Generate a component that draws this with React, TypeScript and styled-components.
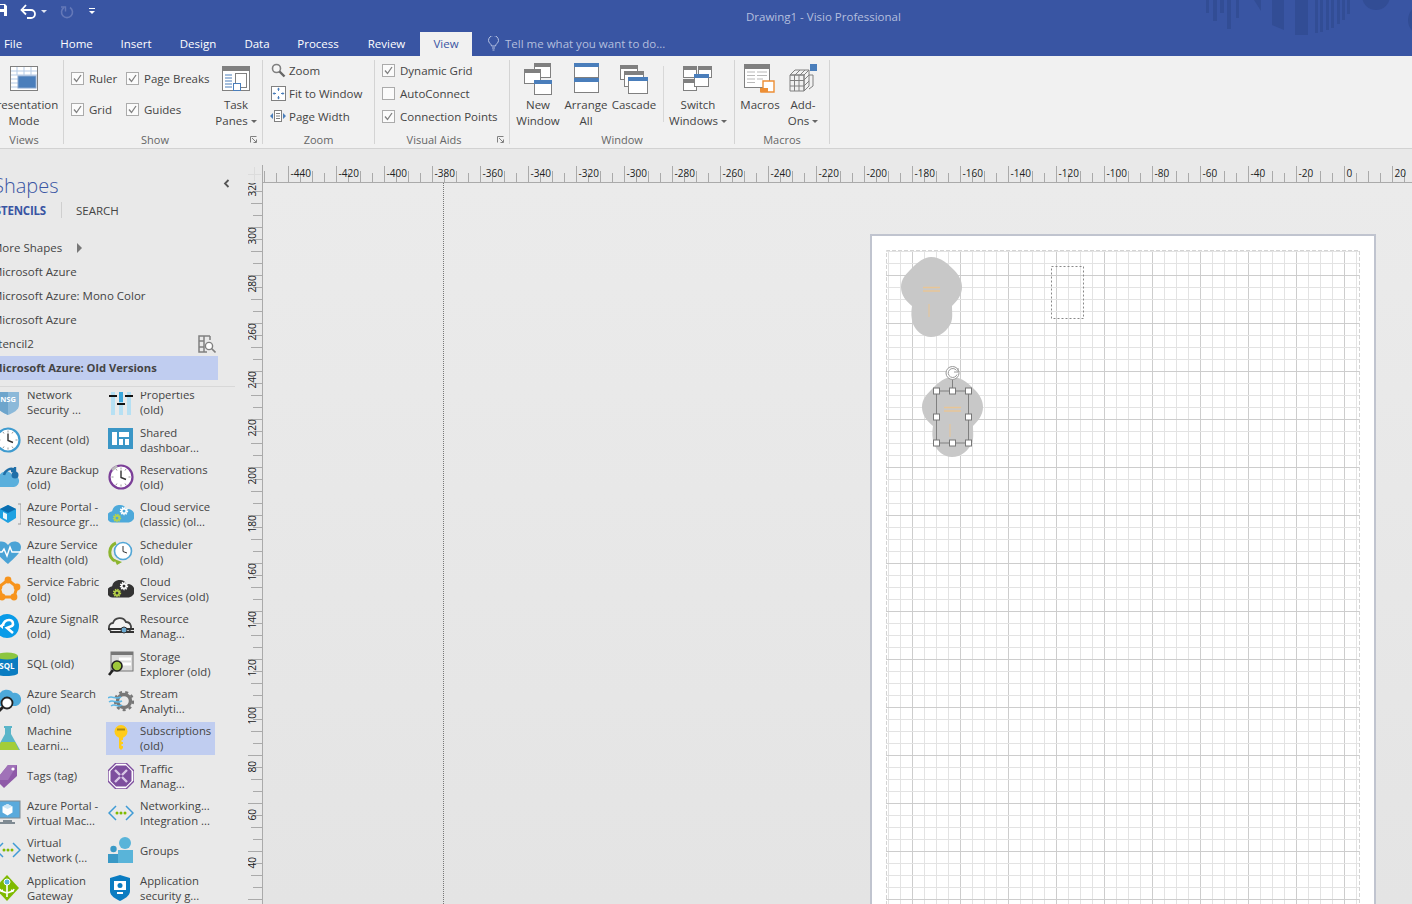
import React from 'react';
import styled, { createGlobalStyle } from 'styled-components';

const BLUE = '#3955a3';
const TEXT = '#444';
const GRAY = '#808080';
const ICON_BLUE = '#4a7ebb';

const GlobalStyle = createGlobalStyle`
  html, body { margin: 0; padding: 0; overflow: hidden; }
  body { font-family: "Open Sans", "Noto Sans", sans-serif; font-size: 11.5px; color: ${TEXT}; }
`;

const Win = ({ x, y, w, h, bar = GRAY }: { x: number; y: number; w: number; h: number; bar?: string }) => (
  <g>
    <rect x={x + 0.5} y={y + 0.5} width={w} height={h} fill="#fff" stroke={GRAY} />
    <rect x={x} y={y} width={w + 1} height={4} fill={bar} />
  </g>
);

const PresentationIcon = () => (
  <svg width="28" height="26" viewBox="0 0 28 26">
    <rect x="0.5" y="0.5" width="27" height="24" fill="#fff" stroke={GRAY} />
    <path d="M1 5h26M1 9h26M1 13h7M1 17h7M1 21h7M7 1v8M14 1v8M21 1v8" stroke="#b5cbe6" />
    <rect x="8" y="10" width="18" height="12" fill={ICON_BLUE} stroke="#8aa8cf" />
  </svg>
);

const TaskPanesIcon = () => (
  <svg width="28" height="26" viewBox="0 0 28 26">
    <rect x="0.5" y="0.5" width="27" height="24" fill="#fff" stroke={GRAY} />
    <rect x="0" y="0" width="28" height="5" fill={GRAY} />
    <path d="M3 9h7M3 12h7M3 15h7M3 18h7M3 21h7" stroke={ICON_BLUE} />
    <rect x="13.5" y="7.5" width="11" height="14" fill="#fff" stroke={GRAY} />
    <rect x="11.5" y="17.5" width="7" height="7" fill="#fff" stroke={ICON_BLUE} />
  </svg>
);

const ZoomIcon = () => (
  <svg width="15" height="15" viewBox="0 0 15 15">
    <circle cx="5.5" cy="5.5" r="4" fill="#f6f6f6" stroke={GRAY} strokeWidth="1.6" />
    <path d="M8.5 8.5l5 5" stroke="#666" strokeWidth="2.4" />
  </svg>
);

const FitIcon = () => (
  <svg width="15" height="15" viewBox="0 0 15 15">
    <rect x="0.5" y="0.5" width="14" height="14" fill="#fff" stroke={GRAY} />
    <path d="M7.5 2v3M7.5 10v3M2 7.5h3M10 7.5h3" stroke={ICON_BLUE} />
    <path d="M7.5 1.5l-1.5 2h3zM7.5 13.5l-1.5-2h3zM1.5 7.5l2-1.5v3zM13.5 7.5l-2-1.5v3z" fill={ICON_BLUE} />
  </svg>
);

const PageWidthIcon = () => (
  <svg width="16" height="13" viewBox="0 0 16 13">
    <rect x="4.5" y="0.5" width="7" height="11" fill="#fff" stroke={GRAY} />
    <path d="M6 3.5h4M6 6h4M6 8.5h4" stroke={GRAY} />
    <path d="M0 6l3-3v6zM16 6l-3-3v6z" fill={ICON_BLUE} />
  </svg>
);

const NewWindowIcon = () => (
  <svg width="28" height="33" viewBox="0 0 28 33">
    <Win x={10} y={1} w={16} h={14} />
    <Win x={0} y={7} w={16} h={14} />
    <Win x={10} y={18} w={17} h={14} bar={ICON_BLUE} />
  </svg>
);

const ArrangeIcon = () => (
  <svg width="25" height="31" viewBox="0 0 25 31">
    <Win x={0} y={0} w={24} h={14} bar={ICON_BLUE} />
    <Win x={0} y={15} w={24} h={14} bar={ICON_BLUE} />
  </svg>
);

const CascadeIcon = () => (
  <svg width="29" height="30" viewBox="0 0 29 30">
    <Win x={0} y={1} w={17} h={14} />
    <Win x={4} y={7} w={19} h={15} />
    <Win x={8} y={13} w={19} h={16} bar={ICON_BLUE} />
  </svg>
);

const SwitchIcon = () => (
  <svg width="30" height="28" viewBox="0 0 30 28">
    <Win x={0} y={1} w={13} h={11} />
    <Win x={15} y={1} w={13} h={11} />
    <Win x={0} y={14} w={13} h={11} />
    <Win x={11} y={9} w={14} h={12} bar={ICON_BLUE} />
  </svg>
);

const MacrosIcon = () => (
  <svg width="32" height="29" viewBox="0 0 32 29">
    <rect x="0.5" y="1.5" width="25" height="22" fill="#fff" stroke={GRAY} />
    <rect x="0" y="0" width="26" height="5" fill={GRAY} />
    <path d="M3 8h8M13 8h10M3 11.5h8M13 11.5h10M3 15h8M13 15h6M3 18.5h8" stroke="#b9b9b9" />
    <path d="M19 17h11v11H17v-3h2z" fill="#fff" stroke="#ed8f36" strokeWidth="1.4" />
    <path d="M16 24h8v4h-8z" fill="#ed8f36" />
  </svg>
);

const AddOnsIcon = () => (
  <svg width="29" height="29" viewBox="0 0 29 29">
    <rect x="21" y="0" width="7" height="7" fill={ICON_BLUE} />
    <path d="M1 11l5-5h14l-5 5zM1 11h14v16H1zM15 11l5-5v16l-5 5zM1 16.5h14M1 22h14M5.500 11v16M10 11v16M11 6l-5 5M16 6l-5 5M15 16l5-5M15 22l5-5M20 11h4v11l-4 3" fill="none" stroke={GRAY} />
  </svg>
);

const StencilSearchIcon = () => (
  <svg width="18" height="18" viewBox="0 0 18 18">
    <path d="M12 1H1v16h8M6 1v16M1 6h5M1 12h5M12 1v4" fill="none" stroke={GRAY} strokeWidth="1.5" />
    <circle cx="11" cy="11" r="3.6" fill="#fff" stroke={GRAY} strokeWidth="1.4" />
    <path d="M13.5 13.5l4 4" stroke={GRAY} strokeWidth="1.6" />
  </svg>
);

const cloud = 'M6 21a5 5 0 0 1-1-10 7 7 0 0 1 13-2 6 6 0 0 1 2 12z';

const Gear = ({ cx, cy, r, c }: { cx: number; cy: number; r: number; c: string }) => (
  <g>
    <circle cx={cx} cy={cy} r={r} fill="none" stroke={c} strokeWidth={r * 0.8} strokeDasharray="1.2 0.8" />
    <circle cx={cx} cy={cy} r={r * 0.75} fill="none" stroke={c} strokeWidth={r * 0.5} />
  </g>
);

const clockHands = (
  <>
    <path d="M13 3.500v2M13 20.500v2M3.500 13h2M20.500 13h2M8 5l1 1.500M18 5l-1 1.500M8 21l1-1.500M18 21l-1-1.500" stroke="#999" />
    <path d="M13 6.500v7l5 2" fill="none" stroke="#333" strokeWidth="1.4" />
  </>
);

const shapeIcons: Record<string, React.ReactNode> = {
  nsg: (
    <>
      <path d="M2 2h22v14c0 5-6 8-11 10C8 24 2 21 2 16z" fill="#8cb9d9" />
      <path d="M2 2h11v24C8 24 2 21 2 16z" fill="#6ea5cc" />
      <text x="13" y="13" textAnchor="middle" fontSize="7.5" fontWeight="700" fill="#fff">NSG</text>
    </>
  ),
  properties: (
    <>
      <path d="M3 1h4v25H3zM11 1h4v25h-4zM19 1h4v25h-4z" fill="#b6e0f3" />
      <path d="M11 1h4v12h-4z" fill="#3aa7dc" />
      <path d="M1 7h8M17 7h8M9 15h8" stroke="#111" strokeWidth="2" />
    </>
  ),
  recent: (
    <>
      <circle cx="13" cy="13" r="11.5" fill="#fff" stroke="#3f9bcf" strokeWidth="2.2" />
      {clockHands}
    </>
  ),
  shared: (
    <>
      <rect x="0" y="1" width="25" height="21" fill="#3a96c6" />
      <path d="M4 5h5v13H4zM11 5h10v5H11zM11 12h4v6h-4zM17 12h4v6h-4z" fill="#fff" />
    </>
  ),
  backup: (
    <>
      <path d={cloud} fill="#5aafdc" transform="translate(-1 2)" />
      <path d="M9 11c1-5 7-8 11-5M20 3v4h-4" fill="none" stroke="#1f6fa8" strokeWidth="2.4" />
      <circle cx="20" cy="11" r="3.5" fill="#1f6fa8" />
    </>
  ),
  reservations: (
    <>
      <circle cx="13" cy="13" r="11.5" fill="#fff" stroke="#7b3f98" strokeWidth="2.2" />
      <path d="M4 6l5-4" stroke="#bbb" strokeWidth="2.4" />
      {clockHands}
    </>
  ),
  resourceGroup: (
    <>
      <path d="M3 3H0v20h3M23 3h3v20h-3" fill="none" stroke="#999" />
      <path d="M13 4l8 4v9l-8 5-8-5V8z" fill="#1ea1e1" />
      <path d="M13 12l8-4-8-4-8 4z" fill="#0a6eb0" />
      <path d="M8 11l4 2v6l-4-2z" fill="#fff" opacity="0.9" />
    </>
  ),
  cloudService: (
    <>
      <path d={cloud} fill="#4da9da" transform="translate(-1.500 -2) scale(1.120)" />
      <Gear cx={16} cy={10} r={3} c="#fff" />
      <Gear cx={9} cy={17} r={3} c="#b8d34a" />
    </>
  ),
  health: (
    <>
      <path d="M13 25C6 19 0 14 0 8c0-6 9-8 13-2 4-6 13-4 13 2 0 6-7 11-13 17z" fill="#4aa3d6" />
      <path d="M0 13h7l2-3 3 7 3-9 2 5h9" fill="none" stroke="#fff" strokeWidth="1.4" />
    </>
  ),
  scheduler: (
    <>
      <path d="M7 22A10 10 0 0 1 8 4" fill="none" stroke="#8cb52e" strokeWidth="3" />
      <path d="M6 20l8 3-5 3z" fill="#8cb52e" />
      <circle cx="15" cy="12" r="8.5" fill="#fff" stroke="#52a6d6" strokeWidth="1.6" />
      <path d="M15 7v5.5l4 1.5" fill="none" stroke="#333" />
    </>
  ),
  fabric: (
    <>
      <path d="M13 4l9 7-3 10H7L4 11z" fill="none" stroke="#f7941d" strokeWidth="3" />
      <circle cx="13" cy="4" r="3.4" fill="#f7941d" />
      <circle cx="22" cy="11" r="3.4" fill="#f7941d" />
      <circle cx="19" cy="21" r="3.4" fill="#f7941d" />
      <circle cx="7" cy="21" r="3.4" fill="#f7941d" />
      <circle cx="4" cy="11" r="3.4" fill="#f7941d" />
    </>
  ),
  cloudServices: (
    <>
      <path d={cloud} fill="#333" transform="translate(-1.500 -2) scale(1.120)" />
      <Gear cx={16} cy={10} r={3} c="#fff" />
      <Gear cx={9} cy={17} r={3} c="#b8d34a" />
    </>
  ),
  signalr: (
    <>
      <circle cx="12" cy="13" r="12" fill="#0a9be8" />
      <path d="M8 13c0-4 3-6 6-6 4 0 5 4 3 6l-5 2 6 5" fill="none" stroke="#fff" strokeWidth="2.6" />
      <path d="M4 13l4-3v6z" fill="#fff" />
    </>
  ),
  manager: (
    <>
      <path d="M6 19a4.5 4.5 0 0 1-1-9 7 7 0 0 1 13-1 5 5 0 0 1 3 9" fill="#f2f2f2" stroke="#444" strokeWidth="1.8" />
      <path d="M0 16h26M2 19h24" stroke="#333" strokeWidth="2.200" />
      <circle cx="16" cy="17" r="3" fill="#6aa9d1" stroke="#333" />
    </>
  ),
  sql: (
    <>
      <path d="M1 5v17c0 4 22 4 22 0V5z" fill="#0a7cc1" />
      <ellipse cx="12" cy="5" rx="11" ry="3.5" fill="#8dc63f" />
      <text x="12" y="18" textAnchor="middle" fontSize="8" fontWeight="700" fill="#fff">SQL</text>
    </>
  ),
  storageExplorer: (
    <>
      <rect x="3" y="1" width="22" height="19" fill="#ddd" stroke="#777" />
      <rect x="3" y="1" width="22" height="3" fill="#777" />
      <path d="M11 8h12M11 13h12" stroke="#fff" strokeWidth="3" />
      <circle cx="9" cy="15" r="5" fill="#9ec83a" stroke="#222" strokeWidth="1.6" />
      <path d="M5 19l-4 5" stroke="#222" strokeWidth="2.6" />
    </>
  ),
  search: (
    <>
      <path d="M5 18a5.5 5.5 0 0 1-1-11 8 8 0 0 1 14-2 6.5 6.5 0 0 1 3 13z" fill="#4da9da" />
      <circle cx="12" cy="15" r="5.5" fill="#fff" stroke="#222" strokeWidth="1.8" />
      <path d="M8 19l-6 6" stroke="#222" strokeWidth="2.8" />
    </>
  ),
  stream: (
    <>
      <circle cx="16" cy="13" r="6.5" fill="none" stroke="#777" strokeWidth="3.4" />
      <circle cx="16" cy="13" r="9" fill="none" stroke="#777" strokeWidth="2.4" strokeDasharray="3 3.2" />
      <path d="M0 10c4-3 7 2 13-1M1 14c4-3 7 2 13-1M3 18c4-3 7 2 11-1" fill="none" stroke="#5cb7e5" strokeWidth="1.5" />
    </>
  ),
  ml: (
    <>
      <path d="M9 1h8v2h-1v6l9 16H1l9-16V3H9z" fill="#5ab5c9" />
      <path d="M6 17h14l4 8H2z" fill="#a3cd39" />
    </>
  ),
  key: (
    <>
      <circle cx="13" cy="6.500" r="6.500" fill="#ffcc1a" />
      <rect x="9" y="3.500" width="8" height="2" fill="#a98712" />
      <path d="M11 12h4v3h-1.500v2H15v2h-1.500v2H15v2l-2 2-2-2z" fill="#ffcc1a" />
    </>
  ),
  tag: (
    <>
      <path d="M1 17L13 2h9v11L9 25z" fill="#8f5aa8" />
      <path d="M1 17l12 0L22 2H13z" fill="#a072b8" />
      <circle cx="18" cy="6" r="1.6" fill="#fff" />
    </>
  ),
  traffic: (
    <>
      <path d="M8 0h10l8 8v10l-8 8H8l-8-8V8z" fill="#fff" stroke="#7d4e9e" strokeWidth="1.4" />
      <path d="M8 2.5h10l5.5 5.5v10L18 23.5H8L2.5 18V8z" fill="#7d4e9e" />
      <path d="M7 7l5 5M19 7l-5 5M7 19l5-5M19 19l-5-5" stroke="#d9c8e6" strokeWidth="2.4" />
    </>
  ),
  portalVm: (
    <>
      <rect x="0" y="1" width="25" height="17" fill="#5aaadc" stroke="#7f8a92" />
      <path d="M8 20h9v2h3v2H5v-2h3z" fill="#7f8a92" />
      <path d="M12.5 4l5 2.5v6l-5 3-5-3v-6z" fill="#fff" />
      <path d="M12.5 9l5-2.5-5-2.5-5 2.5z" fill="#cfe8f7" />
    </>
  ),
  network: (
    <>
      <path d="M8 6l-7 7 7 7M18 6l7 7-7 7" fill="none" stroke="#3f9bd5" strokeWidth="1.5" />
      <circle cx="9" cy="13" r="1.5" fill="#7fba00" />
      <circle cx="13" cy="13" r="1.5" fill="#7fba00" />
      <circle cx="17" cy="13" r="1.5" fill="#7fba00" />
    </>
  ),
  groups: (
    <>
      <circle cx="17" cy="6" r="6" fill="#59b4d9" />
      <path d="M10 13h15v13H10z" fill="#59b4d9" />
      <circle cx="5.5" cy="12" r="3.2" fill="#3999c6" />
      <path d="M0 17h10v9H0z" fill="#3999c6" />
    </>
  ),
  gateway: (
    <>
      <path d="M12 0l12 13-12 13L0 13z" fill="#7fba00" />
      <circle cx="12" cy="7" r="3" fill="#59b4d9" stroke="#fff" />
      <path d="M12 10v12M12 18l-6-2M12 18l6-2M5 14l1 2 2-1M19 14l-1 2-2-1" fill="none" stroke="#fff" strokeWidth="1.6" />
    </>
  ),
  appSecurity: (
    <>
      <path d="M2 3l10-3 10 3v13c0 5-6 8-10 10C8 24 2 21 2 16z" fill="#0a7cc1" />
      <rect x="6" y="6" width="12" height="9" fill="#fff" />
      <circle cx="12" cy="10.5" r="2.5" fill="#0a7cc1" />
      <path d="M9 18h6" stroke="#fff" strokeWidth="2" />
    </>
  ),
};

const stencilRows = ['More Shapes', 'Microsoft Azure', 'Microsoft Azure: Mono Color', 'Microsoft Azure', 'Stencil2', 'Microsoft Azure: Old Versions'];

const shapes: { icon: string; lines: string[]; selected?: boolean }[] = [
  { icon: 'nsg', lines: ['Network', 'Security ...'] },
  { icon: 'properties', lines: ['Properties', '(old)'] },
  { icon: 'recent', lines: ['Recent (old)'] },
  { icon: 'shared', lines: ['Shared', 'dashboar...'] },
  { icon: 'backup', lines: ['Azure Backup', '(old)'] },
  { icon: 'reservations', lines: ['Reservations', '(old)'] },
  { icon: 'resourceGroup', lines: ['Azure Portal -', 'Resource gr...'] },
  { icon: 'cloudService', lines: ['Cloud service', '(classic) (ol...'] },
  { icon: 'health', lines: ['Azure Service', 'Health (old)'] },
  { icon: 'scheduler', lines: ['Scheduler', '(old)'] },
  { icon: 'fabric', lines: ['Service Fabric', '(old)'] },
  { icon: 'cloudServices', lines: ['Cloud', 'Services (old)'] },
  { icon: 'signalr', lines: ['Azure SignalR', '(old)'] },
  { icon: 'manager', lines: ['Resource', 'Manag...'] },
  { icon: 'sql', lines: ['SQL (old)'] },
  { icon: 'storageExplorer', lines: ['Storage', 'Explorer (old)'] },
  { icon: 'search', lines: ['Azure Search', '(old)'] },
  { icon: 'stream', lines: ['Stream', 'Analyti...'] },
  { icon: 'ml', lines: ['Machine', 'Learni...'] },
  { icon: 'key', lines: ['Subscriptions', '(old)'], selected: true },
  { icon: 'tag', lines: ['Tags (tag)'] },
  { icon: 'traffic', lines: ['Traffic', 'Manag...'] },
  { icon: 'portalVm', lines: ['Azure Portal -', 'Virtual Mac...'] },
  { icon: 'network', lines: ['Networking...', 'Integration ...'] },
  { icon: 'network', lines: ['Virtual', 'Network (...'] },
  { icon: 'groups', lines: ['Groups'] },
  { icon: 'gateway', lines: ['Application', 'Gateway'] },
  { icon: 'appSecurity', lines: ['Application', 'security g...'] },
];

const tabs: { label: string; w: number; active?: boolean }[] = [
  { label: 'File', w: 66 },
  { label: 'Home', w: 61 },
  { label: 'Insert', w: 58 },
  { label: 'Design', w: 66 },
  { label: 'Data', w: 52 },
  { label: 'Process', w: 70 },
  { label: 'Review', w: 67 },
  { label: 'View', w: 52, active: true },
];

const range = (n: number) => Array.from({ length: n }, (_, i) => i);

const HorizontalRuler = () => (
  <RulerSvg width="1164" height="18" viewBox="248 165 1164 18">
    <path d="M247 174.5h14M254.5 167v14" stroke="#dcdcdc" />
    <path d="M262.5 165v18" stroke="#aaa" />
    <path d="M262 182.5h1150" stroke="#aaa" />
    <path d="M264.500 171V182M276.500 173V182" stroke="#aaa" />
    {range(25).map((i) => {
      const x = 288.5 + i * 48;
      return (
        <g key={i} stroke="#aaa">
          <path d={`M${x} 166V182M${x + 12} 173V182M${x + 24} 171V182M${x + 36} 173V182`} />
          <text x={x + 2} y={177} fontSize="10" stroke="none" fill="#222">{-440 + i * 20}</text>
        </g>
      );
    })}
  </RulerSvg>
);

const VerticalRuler = () => (
  <RulerSvg width="15" height="721" viewBox="248 183 15 721">
    <path d="M262.5 183v721" stroke="#aaa" />
    {range(16).map((i) => {
      const y = 179.5 + i * 48;
      return (
        <g key={i} stroke="#aaa">
          <path d={`M246 ${y}H262M253 ${y + 12}H262M251 ${y + 24}H262M253 ${y + 36}H262`} />
          <text transform={`translate(255.5 ${y + 17}) rotate(-90)`} fontSize="10" stroke="none" fill="#222">{320 - i * 20}</text>
        </g>
      );
    })}
  </RulerSvg>
);

const blob = 'M931 257C941 257 948 264 954 270C960 276 962 282 962 287C962 295 957 301 952 306C952 312 953 318 951 323C947 331 940 337 931 337C923 337 916 331 913 324C911 318 911 312 912 306C906 301 901 295 901 287C901 279 906 274 912 268C918 262 924 257 931 257Z';

const Stencil = ({ dx = 0, dy = 0 }: { dx?: number; dy?: number }) => (
  <g transform={`translate(${dx} ${dy})`}>
    <path d={blob} fill="#c8c8c8" />
    <path d="M923 287.5h17M923 291h17" stroke="#e8c596" strokeWidth="1.6" fill="none" />
    <path d="M929 304v13" stroke="#e8c596" strokeWidth="1" fill="none" />
  </g>
);

const handles: [number, number][] = [
  [936.5, 391], [952.5, 391], [968.5, 391], [936.5, 417], [968.5, 417], [936.5, 443], [952.5, 443], [968.5, 443],
];

const DrawingPage = () => (
  <PageSvg width="502" height="669" viewBox="872 236 502 669">
    {range(40).map((i) => {
      const x = 888.5 + i * 12;
      return <path key={i} d={`M${x} 250V905`} stroke={(i + 10) % 4 === 0 ? '#cdcdcd' : '#e3e3e3'} />;
    })}
    {range(55).map((i) => {
      const y = 251.5 + i * 12;
      return <path key={i} d={`M886 ${y}H1359`} stroke={(i + 2) % 4 === 0 ? '#cdcdcd' : '#e3e3e3'} />;
    })}
    <path d="M886.5 905V250.5H1359.5V905" fill="none" stroke="#d4d4d4" strokeDasharray="4 2" />
    <Stencil />
    <Stencil dx={21} dy={120} />
    <rect x="1051.5" y="266.5" width="32" height="52" fill="none" stroke="#888" strokeDasharray="2 2" />
    <rect x="936.5" y="391" width="32" height="52" fill="none" stroke="#808080" />
    <path d="M952.5 379v12" stroke="#808080" />
    <circle cx="952.5" cy="373" r="6.5" fill="#fff" stroke="#999" />
    <path d="M956.5 370.500a4.500 4.500 0 1 0 0.500 4" fill="none" stroke="#999" />
    <path d="M958 368v4h-4" fill="none" stroke="#999" />
    {handles.map(([x, y]) => (
      <rect key={`${x}-${y}`} x={x - 3} y={y - 3} width="6" height="6" fill="#fff" stroke="#777" />
    ))}
  </PageSvg>
);

const CheckItem = ({ label, checked = true }: { label: string; checked?: boolean }) => (
  <CheckRow>
    <CheckBox>
      {checked && (
        <svg width="11" height="11" viewBox="0 0 11 11">
          <path d="M2 5.5l2.5 3L9 2" fill="none" stroke={GRAY} strokeWidth="1.3" />
        </svg>
      )}
    </CheckBox>
    {label}
  </CheckRow>
);

const Launcher = () => (
  <LauncherBox width="7" height="7" viewBox="0 0 7 7">
    <path d="M0.5 6.5V0.5H6.5" fill="none" stroke={GRAY} />
    <path d="M2 2l4 4M6.5 3.5v3h-3" fill="none" stroke={GRAY} />
  </LauncherBox>
);

const App = () => (
  <Root>
    <GlobalStyle />
    <TitleBar>
      <QatRow>
        <QatGroup>
          <svg width="12" height="12" viewBox="0 0 12 12">
            <path d="M0 0h10l2 2v10H0z" fill="#fff" />
            <path d="M2 1h7v4H2zM3 8h6v4H3z" fill={BLUE} />
          </svg>
          <UndoBox width="17" height="15" viewBox="0 0 17 15">
            <path d="M3 6h8a4 4 0 0 1 0 8H7" fill="none" stroke="#fff" strokeWidth="1.8" />
            <path d="M6 1L1.5 6 6 10.5" fill="none" stroke="#fff" strokeWidth="1.8" />
          </UndoBox>
          <QatCaret />
          <RedoBox width="14" height="14" viewBox="0 0 14 14">
            <path d="M4 2.5a5.5 5.5 0 1 0 6 0" fill="none" stroke="#6478b8" strokeWidth="1.6" />
            <path d="M1 2h4.5v4.5" fill="none" stroke="#6478b8" strokeWidth="1.4" />
          </RedoBox>
          <CustomizeBox width="6" height="8" viewBox="0 0 6 8">
            <path d="M0 1.5h6" stroke="#fff" />
            <path d="M0 4h6L3 7z" fill="#fff" />
          </CustomizeBox>
        </QatGroup>
        <WindowTitle>Drawing1 - Visio Professional</WindowTitle>
      </QatRow>
      <TabRow>
        {tabs.map((t) => (
          <Tab key={t.label} $w={t.w} $active={t.active}>{t.label}</Tab>
        ))}
        <TellMe>
          <svg width="11" height="15" viewBox="0 0 11 15">
            <path d="M3.5 10c0-2-3-3-3-5.500a5 5 0 0 1 10 0c0 2.500-3 3.500-3 5.500zM4 12h3M4.500 14h2" fill="none" stroke="#b7c3e2" />
          </svg>
          Tell me what you want to do...
        </TellMe>
      </TabRow>
      <TitleArt width="207" height="36" viewBox="1205 0 207 36">
        <path d="M1206 0h3v13h-3zM1213 0h4v21h-4zM1220 0h4v13h-4zM1227 0h4v29h-4zM1236 0h3v18h-3zM1254 0h7v11zM1272 0h12v30l-12-5zM1295 0h13v35h-13zM1315 0h3v33h-3zM1320 0h3v32h-3zM1326 0h3v30h-3zM1331 0h3v28h-3zM1337 0h3v24h-3zM1342 0h3v20h-3zM1347 0h3v14h-3z" fill="#324d95" />
        <circle cx="1376" cy="-4" r="14" fill="#324d95" />
        <circle cx="1424" cy="20" r="16" fill="#324d95" />
      </TitleArt>
    </TitleBar>

    <Ribbon>
      <Group $w={79} $first label="Views">
        <BigButton $w={78}>
          <IconSlot><PresentationIcon /></IconSlot>
          <BigLabel>Presentation<br />Mode</BigLabel>
        </BigButton>
      </Group>
      <Group $w={199} label="Show" launcher>
        <CheckColumn $w={62} $pad={7}>
          <CheckItem label="Ruler" />
          <CheckItem label="Grid" />
        </CheckColumn>
        <CheckColumn $w={90} $pad={0}>
          <CheckItem label="Page Breaks" />
          <CheckItem label="Guides" />
        </CheckColumn>
        <BigButton $w={40}>
          <IconSlot><TaskPanesIcon /></IconSlot>
          <BigLabel>Task<br />Panes<Caret /></BigLabel>
        </BigButton>
      </Group>
      <Group $w={112} label="Zoom">
        <SmallColumn>
          <SmallRow><SmallIcon><ZoomIcon /></SmallIcon>Zoom</SmallRow>
          <SmallRow><SmallIcon><FitIcon /></SmallIcon>Fit to Window</SmallRow>
          <SmallRow><SmallIcon><PageWidthIcon /></SmallIcon>Page Width</SmallRow>
        </SmallColumn>
      </Group>
      <Group $w={135} label="Visual Aids" launcher>
        <SmallColumn>
          <CheckItem label="Dynamic Grid" />
          <CheckItem label="AutoConnect" checked={false} />
          <CheckItem label="Connection Points" />
        </SmallColumn>
      </Group>
      <Group $w={225} label="Window">
        <ButtonRow>
          <BigButton $w={48}>
            <IconSlot><NewWindowIcon /></IconSlot>
            <BigLabel>New<br />Window</BigLabel>
          </BigButton>
          <BigButton $w={48}>
            <IconSlot><ArrangeIcon /></IconSlot>
            <BigLabel>Arrange<br />All</BigLabel>
          </BigButton>
          <BigButton $w={48}>
            <IconSlot><CascadeIcon /></IconSlot>
            <BigLabel>Cascade</BigLabel>
          </BigButton>
          <InnerSeparator />
          <BigButton $w={60}>
            <IconSlot><SwitchIcon /></IconSlot>
            <BigLabel>Switch<br />Windows<Caret /></BigLabel>
          </BigButton>
        </ButtonRow>
      </Group>
      <Group $w={95} label="Macros">
        <MacroRow>
          <BigButton $w={48}>
            <IconSlot><MacrosIcon /></IconSlot>
            <BigLabel>Macros</BigLabel>
          </BigButton>
          <BigButton $w={38}>
            <IconSlot><AddOnsIcon /></IconSlot>
            <BigLabel>Add-<br />Ons<Caret /></BigLabel>
          </BigButton>
        </MacroRow>
      </Group>
    </Ribbon>

    <Main>
      <Panel>
        <PanelHead>
          <PanelTitle>Shapes</PanelTitle>
          <svg width="7" height="9" viewBox="0 0 7 9">
            <path d="M5.500 1L2 4.500 5.500 8" fill="none" stroke="#555" strokeWidth="1.8" />
          </svg>
        </PanelHead>
        <PanelTabs>
          <PanelTabActive>STENCILS</PanelTabActive>
          <PanelTabRule />
          <PanelTab>SEARCH</PanelTab>
        </PanelTabs>
        <StencilList>
          {stencilRows.map((row, i) => (
            <StencilRow key={`${row}-${i}`} $selected={i === 5}>
              {row}
              {i === 0 && <MoreArrow />}
              {i === 4 && <StencilTool><StencilSearchIcon /></StencilTool>}
            </StencilRow>
          ))}
        </StencilList>
        <PanelDivider />
        <ShapeViewport>
          <ShapeGrid>
            {shapes.map((s) => (
              <ShapeCell key={s.lines.join()} $selected={s.selected}>
                <ShapeIcon width="26" height="26" viewBox="0 0 26 26">{shapeIcons[s.icon]}</ShapeIcon>
                <ShapeLabel>
                  {s.lines.map((l) => <div key={l}>{l}</div>)}
                </ShapeLabel>
              </ShapeCell>
            ))}
          </ShapeGrid>
        </ShapeViewport>
      </Panel>
      <DrawArea>
        <HorizontalRuler />
        <RulerAndCanvas>
          <VerticalRuler />
          <Canvas>
            <Guide />
            <Page><DrawingPage /></Page>
          </Canvas>
        </RulerAndCanvas>
      </DrawArea>
    </Main>
  </Root>
);

export default App;

const Root = styled.div`
  width: 1412px;
  height: 904px;
  overflow: hidden;
  display: flex;
  flex-direction: column;
  background: #e9e9e9;
`;

const TitleBar = styled.div`
  position: relative;
  height: 56px;
  flex: none;
  background: ${BLUE};
  overflow: hidden;
`;

const TitleArt = styled.svg`
  position: absolute;
  top: 0;
  right: 0;
`;

const QatRow = styled.div`
  height: 32px;
  display: flex;
`;

const QatGroup = styled.div`
  display: flex;
  align-items: flex-start;
  width: 746px;
  margin-left: -5px;
  padding-top: 4px;
  box-sizing: border-box;
`;

const UndoBox = styled.svg`
  margin-left: 13px;
`;

const QatCaret = styled.span`
  margin: 6px 0 0 4px;
  border-top: 3px solid #dfe4f2;
  border-left: 3px solid transparent;
  border-right: 3px solid transparent;
`;

const RedoBox = styled.svg`
  margin: 1px 0 0 13px;
`;

const CustomizeBox = styled.svg`
  margin: 3px 0 0 15px;
`;

const WindowTitle = styled.div`
  margin-left: 5px;
  line-height: 34px;
  font-size: 11.5px;
  color: #b4bfde;
  white-space: nowrap;
`;

const TabRow = styled.div`
  height: 24px;
  display: flex;
  margin-left: -20px;
`;

const Tab = styled.div<{ $w: number; $active?: boolean }>`
  width: ${(p) => p.$w}px;
  text-align: center;
  line-height: 24px;
  font-size: 11.5px;
  color: ${(p) => (p.$active ? BLUE : '#fff')};
  background: ${(p) => (p.$active ? '#f1f1f1' : 'transparent')};
`;

const TellMe = styled.div`
  display: flex;
  align-items: center;
  gap: 6px;
  margin-left: 16px;
  padding-bottom: 2px;
  color: #b4bfde;
  font-size: 11.5px;
`;

const Ribbon = styled.div`
  height: 93px;
  flex: none;
  box-sizing: border-box;
  display: flex;
  padding-top: 4px;
  background: #f1f1f1;
  border-bottom: 1px solid #d2d2d2;
`;

const GroupBox = styled.div<{ $w: number; $first?: boolean }>`
  position: relative;
  box-sizing: border-box;
  flex: none;
  width: ${(p) => p.$w}px;
  margin-left: ${(p) => (p.$first ? '-15px' : '0')};
  height: 84px;
  display: flex;
  flex-direction: column;
  border-right: 1px solid #d4d4d4;
`;

const GroupBody = styled.div`
  height: 72px;
  display: flex;
  flex: none;
`;

const GroupLabel = styled.div<{ $launcher?: boolean }>`
  height: 12px;
  line-height: 16px;
  text-align: center;
  padding-right: ${(p) => (p.$launcher ? '16px' : '0')};
  font-size: 11px;
  color: #666;
`;

const LauncherBox = styled.svg`
  position: absolute;
  right: 5px;
  bottom: 1px;
`;

const Group = ({ $w, $first, label, launcher, children }: { $w: number; $first?: boolean; label: string; launcher?: boolean; children: React.ReactNode }) => (
  <GroupBox $w={$w} $first={$first}>
    <GroupBody>{children}</GroupBody>
    <GroupLabel $launcher={launcher}>{label}</GroupLabel>
    {launcher && <Launcher />}
  </GroupBox>
);

const BigButton = styled.div<{ $w: number }>`
  flex: none;
  width: ${(p) => p.$w}px;
  display: flex;
  flex-direction: column;
  align-items: center;
  padding-top: 2px;
`;

const IconSlot = styled.div`
  height: 33px;
  display: flex;
  align-items: center;
  justify-content: center;
`;

const BigLabel = styled.div`
  margin-top: 2px;
  line-height: 16px;
  text-align: center;
  white-space: nowrap;
`;

const Caret = styled.span`
  display: inline-block;
  margin-left: 3px;
  vertical-align: 2px;
  border-top: 3px solid #666;
  border-left: 3px solid transparent;
  border-right: 3px solid transparent;
`;

const CheckColumn = styled.div<{ $w: number; $pad: number }>`
  flex: none;
  width: ${(p) => p.$w}px;
  box-sizing: border-box;
  padding-left: ${(p) => p.$pad}px;
  padding-top: 3px;
  display: grid;
  grid-auto-rows: 31px;
`;

const CheckRow = styled.div`
  display: flex;
  align-items: center;
  gap: 5px;
  white-space: nowrap;
`;

const CheckBox = styled.span`
  box-sizing: border-box;
  width: 13px;
  height: 13px;
  display: flex;
  align-items: center;
  justify-content: center;
  background: #fbfbfb;
  border: 1px solid #ababab;
`;

const SmallColumn = styled.div`
  display: grid;
  grid-auto-rows: 23px;
  margin-top: -1px;
  padding-left: 7px;
`;

const SmallRow = styled.div`
  display: flex;
  align-items: center;
  gap: 3px;
  white-space: nowrap;
`;

const SmallIcon = styled.span`
  width: 16px;
  display: flex;
  justify-content: center;
`;

const ButtonRow = styled.div`
  display: flex;
  padding-left: 4px;
`;

const MacroRow = styled.div`
  display: flex;
  padding-left: 1px;
`;

const InnerSeparator = styled.div`
  width: 1px;
  height: 56px;
  margin: 6px 4px 0 5px;
  background: #d8d8d8;
`;

const Main = styled.div`
  flex: 1;
  display: flex;
  min-height: 0;
`;

const Panel = styled.div`
  flex: none;
  width: 258px;
  margin-left: -10px;
  display: flex;
  flex-direction: column;
  background: #e9e9e9;
`;

const PanelHead = styled.div`
  display: flex;
  align-items: center;
  justify-content: space-between;
  padding: 24px 18px 0 3px;
  svg { margin-top: -6px; }
`;

const PanelTitle = styled.div`
  font-size: 20px;
  font-weight: 300;
  line-height: 26px;
  color: ${BLUE};
`;

const PanelTabs = styled.div`
  display: flex;
  align-items: center;
  height: 16px;
  margin-top: 3px;
`;

const PanelTabActive = styled.div`
  width: 56px;
  display: flex;
  justify-content: flex-end;
  font-weight: 700;
  font-size: 11.5px;
  letter-spacing: -0.2px;
  color: ${BLUE};
  white-space: nowrap;
`;

const PanelTabRule = styled.div`
  width: 1px;
  height: 16px;
  margin: 0 14px 0 15px;
  background: #cfcfcf;
`;

const PanelTab = styled.div`
  font-size: 11.5px;
`;

const StencilList = styled.div`
  margin-top: 18px;
  width: 228px;
`;

const StencilRow = styled.div<{ $selected?: boolean }>`
  position: relative;
  height: 24px;
  line-height: 24px;
  padding-left: 2px;
  display: flex;
  align-items: center;
  font-weight: ${(p) => (p.$selected ? 700 : 400)};
  font-size: ${(p) => (p.$selected ? '11.2px' : '11.5px')};
  background: ${(p) => (p.$selected ? '#c0cdf0' : 'transparent')};
  white-space: nowrap;
`;

const MoreArrow = styled.span`
  margin-left: 15px;
  border-left: 5px solid #777;
  border-top: 5px solid transparent;
  border-bottom: 5px solid transparent;
`;

const StencilTool = styled.span`
  position: absolute;
  left: 208px;
  top: 3px;
`;

const PanelDivider = styled.div`
  width: 245px;
  height: 1px;
  margin-top: 6px;
  background: #d8d8d8;
`;

const ShapeViewport = styled.div`
  flex: 1;
  min-height: 0;
  margin-top: 5px;
  overflow: hidden;
`;

const ShapeGrid = styled.div`
  display: grid;
  grid-template-columns: 109px 109px;
  grid-auto-rows: 37.33px;
  column-gap: 4px;
  margin-top: -8.2px;
  padding-left: 3px;
`;

const ShapeCell = styled.div<{ $selected?: boolean }>`
  align-self: center;
  height: 33px;
  display: flex;
  align-items: center;
  gap: 6px;
  padding-left: 2px;
  background: ${(p) => (p.$selected ? '#c0cdf0' : 'transparent')};
`;

const ShapeIcon = styled.svg`
  flex: none;
  text { font-family: "Open Sans", sans-serif; }
`;

const ShapeLabel = styled.div`
  line-height: 15px;
  white-space: nowrap;
  font-size: 11.3px;
`;

const DrawArea = styled.div`
  flex: 1;
  min-width: 0;
  display: flex;
  flex-direction: column;
  padding-top: 16px;
`;

const RulerSvg = styled.svg`
  display: block;
  flex: none;
  text { font-family: "Open Sans", sans-serif; }
`;

const RulerAndCanvas = styled.div`
  flex: 1;
  min-height: 0;
  display: flex;
`;

const Canvas = styled.div`
  position: relative;
  flex: 1;
  min-width: 0;
  overflow: hidden;
  box-sizing: border-box;
  padding: 51px 0 0 607px;
  background: linear-gradient(#ebebeb, #e4e4e4);
`;

const Guide = styled.div`
  position: absolute;
  left: 180px;
  top: 0;
  bottom: 0;
  border-left: 1px dotted #777;
`;

const Page = styled.div`
  width: 502px;
  height: 700px;
  background: #fff;
  border: 2px solid #c0c4cf;
  border-bottom: none;
`;

const PageSvg = styled.svg`
  display: block;
`;
